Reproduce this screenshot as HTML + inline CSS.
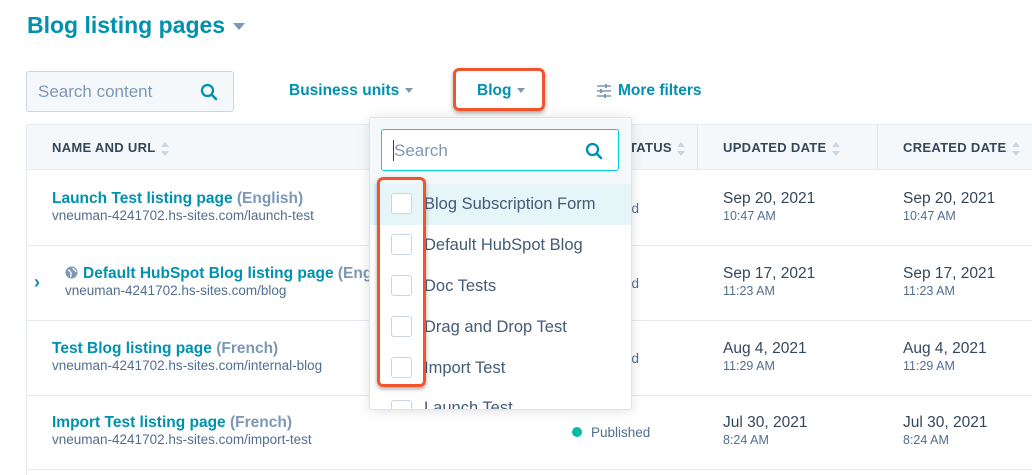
<!DOCTYPE html>
<html><head><style>
*{box-sizing:border-box;margin:0;padding:0}
body{width:1032px;height:475px;overflow:hidden;background:#fff;font-family:"Liberation Sans",sans-serif;position:relative;color:#33475b}
.a{position:absolute}
.teal{color:#0091ae}
.hd{font-size:13px;font-weight:bold;color:#33475b;letter-spacing:.3px}
.t1{font-size:15.5px;font-weight:bold;color:#0091ae;white-space:nowrap}
.t1 span{color:#7c98b6}
.url{font-size:13.5px;color:#516f90;white-space:nowrap}
.d1{font-size:15.5px;color:#33475b}
.d2{font-size:12.5px;color:#516f90}
.line{position:absolute;left:26px;right:0;height:1px;background:#e5ebf0}
.cb{position:absolute;left:391px;width:21px;height:21px;border:1.5px solid #cbd6e2;border-radius:3px;background:#fff}
.it{position:absolute;left:424px;font-size:16.5px;color:#425b76;white-space:nowrap}
.caret{display:inline-block;width:0;height:0;border-left:4px solid transparent;border-right:4px solid transparent;border-top:5px solid #7c98b6;vertical-align:middle;margin-left:6px}
.sort{display:inline-block;width:8px;height:14px;vertical-align:middle;margin-left:5px;position:relative}
.sort:before{content:"";position:absolute;top:0;left:0;border-left:4px solid transparent;border-right:4px solid transparent;border-bottom:5px solid #cbd6e2}
.sort:after{content:"";position:absolute;bottom:0;left:0;border-left:4px solid transparent;border-right:4px solid transparent;border-top:5px solid #cbd6e2}
</style></head><body>
<div class="a" style="left:27px;top:12px;font-size:23px;font-weight:bold;color:#0091ae">Blog listing pages <span class="caret" style="border-left-width:6px;border-right-width:6px;border-top-width:7px;margin-left:2px"></span></div>

<div class="a" style="left:26px;top:71px;width:208px;height:41px;border:1px solid #cbd6e2;border-radius:3px;background:#f5f8fa"></div>
<div class="a" style="left:38px;top:82px;font-size:17px;color:#7c98b6">Search content</div>
<svg class="a" style="left:200px;top:83px" width="18" height="18" viewBox="0 0 18 18"><circle cx="7.5" cy="7.5" r="5.5" fill="none" stroke="#0091ae" stroke-width="2.3"/><path d="M11.5 11.5L16 16" stroke="#0091ae" stroke-width="2.5" stroke-linecap="round"/></svg>

<div class="a t1" style="left:289px;top:82px;color:#0091ae">Business units<span class="caret"></span></div>

<div class="a" style="left:453px;top:68px;width:92px;height:43px;border:3px solid #f2542d;border-radius:6px;box-shadow:0 2px 4px rgba(0,0,0,.35)"></div>
<div class="a t1" style="left:477px;top:82px">Blog<span class="caret"></span></div>

<svg class="a" style="left:597px;top:84px" width="14" height="14" viewBox="0 0 14 14" stroke="#7c98b6" stroke-width="1.5"><path d="M0 2h14M0 7h14M0 12h14"/><path d="M9 0v4M4 5v4M8 10v4" stroke-width="2"/></svg>
<div class="a t1" style="left:618px;top:82px">More filters</div>

<div class="a" style="left:26px;top:124px;right:0;height:46px;background:#f5f8fa;border:1px solid #e5ebf0;border-right:none"></div>
<div class="a" style="left:26px;top:124px;width:1px;height:351px;background:#e5ebf0"></div>
<div class="a" style="left:697px;top:124px;width:1px;height:46px;background:#dfe3eb"></div>
<div class="a" style="left:877px;top:124px;width:1px;height:46px;background:#dfe3eb"></div>
<div class="a hd" style="left:52px;top:140px">NAME AND URL<span class="sort"></span></div>
<div class="a hd" style="left:620px;top:140px">STATUS<span class="sort"></span></div>
<div class="a hd" style="left:723px;top:140px">UPDATED DATE<span class="sort"></span></div>
<div class="a hd" style="left:903px;top:140px">CREATED DATE<span class="sort"></span></div>
<div class="line" style="top:245px"></div>
<div class="line" style="top:320px"></div>
<div class="line" style="top:395px"></div>
<div class="line" style="top:469px"></div>

<div class="a t1" style="left:52px;top:190px">Launch Test listing page <span>(English)</span></div>
<div class="a url" style="left:52px;top:208px">vneuman-4241702.hs-sites.com/launch-test</div>
<div class="a teal" style="left:34px;top:272px;font-size:18px;font-weight:bold">›</div>
<svg class="a" style="left:65px;top:266px" width="13" height="13" viewBox="0 0 13 13"><circle cx="6.5" cy="6.5" r="6" fill="#7c98b6"/><path d="M3 4c2 0 2 2 3 3s-1 3 0 4M8 2c0 2 3 2 3 4" stroke="#fff" stroke-width="1.3" fill="none"/></svg>
<div class="a t1" style="left:83px;top:265px">Default HubSpot Blog listing page <span>(Eng</span></div>
<div class="a url" style="left:65px;top:283px">vneuman-4241702.hs-sites.com/blog</div>
<div class="a t1" style="left:52px;top:340px">Test Blog listing page <span>(French)</span></div>
<div class="a url" style="left:52px;top:358px">vneuman-4241702.hs-sites.com/internal-blog</div>
<div class="a t1" style="left:52px;top:414px">Import Test listing page <span>(French)</span></div>
<div class="a url" style="left:52px;top:432px">vneuman-4241702.hs-sites.com/import-test</div>

<div class="a url" style="left:624px;top:201px">ed</div>
<div class="a url" style="left:624px;top:276px">ed</div>
<div class="a url" style="left:624px;top:351px">ed</div>
<div class="a" style="left:572px;top:427px;width:10px;height:10px;border-radius:50%;background:#00bda5"></div>
<div class="a url" style="left:591px;top:425px">Published</div>

<div class="a d1" style="left:723px;top:190px">Sep 20, 2021</div><div class="a d2" style="left:723px;top:209px">10:47 AM</div>
<div class="a d1" style="left:903px;top:190px">Sep 20, 2021</div><div class="a d2" style="left:903px;top:209px">10:47 AM</div>
<div class="a d1" style="left:723px;top:265px">Sep 17, 2021</div><div class="a d2" style="left:723px;top:284px">11:23 AM</div>
<div class="a d1" style="left:903px;top:265px">Sep 17, 2021</div><div class="a d2" style="left:903px;top:284px">11:23 AM</div>
<div class="a d1" style="left:723px;top:340px">Aug 4, 2021</div><div class="a d2" style="left:723px;top:359px">11:29 AM</div>
<div class="a d1" style="left:903px;top:340px">Aug 4, 2021</div><div class="a d2" style="left:903px;top:359px">11:29 AM</div>
<div class="a d1" style="left:723px;top:414px">Jul 30, 2021</div><div class="a d2" style="left:723px;top:433px">8:24 AM</div>
<div class="a d1" style="left:903px;top:414px">Jul 30, 2021</div><div class="a d2" style="left:903px;top:433px">8:24 AM</div>

<div class="a" style="left:369px;top:117px;width:263px;height:293px;background:#fff;border:1px solid #dfe3eb;border-radius:3px;box-shadow:0 1px 12px rgba(0,0,0,.12);overflow:hidden">
  <div style="position:absolute;left:0;top:0;right:0;height:66px;background:#f5f8fa"></div>
  <div style="position:absolute;left:0;top:66px;right:0;height:41px;background:#e5f5f8"></div>
</div>
<div class="a" style="left:381px;top:129px;width:238px;height:42px;border:1.5px solid #00d0e4;border-radius:3px;background:#fff"></div>
<div class="a" style="left:393px;top:140px;width:1px;height:21px;background:#33475b"></div>
<div class="a" style="left:394px;top:141px;font-size:17px;color:#7c98b6">Search</div>
<svg class="a" style="left:585px;top:142px" width="18" height="18" viewBox="0 0 18 18"><circle cx="7.5" cy="7.5" r="5.5" fill="none" stroke="#0091ae" stroke-width="2.3"/><path d="M11.5 11.5L16 16" stroke="#0091ae" stroke-width="2.5" stroke-linecap="round"/></svg>

<div class="cb" style="top:193px"></div><div class="it" style="top:195px">Blog Subscription Form</div>
<div class="cb" style="top:234px"></div><div class="it" style="top:236px">Default HubSpot Blog</div>
<div class="cb" style="top:275px"></div><div class="it" style="top:277px">Doc Tests</div>
<div class="cb" style="top:316px"></div><div class="it" style="top:318px">Drag and Drop Test</div>
<div class="cb" style="top:357px"></div><div class="it" style="top:359px">Import Test</div>
<div class="a" style="left:370px;top:398px;width:261px;height:11px;overflow:hidden">
  <div class="cb" style="left:21px;top:2px"></div><div class="it" style="left:54px;top:1px">Launch Test</div>
</div>

<div class="a" style="left:377px;top:177px;width:49px;height:210px;border:3px solid #f2542d;border-radius:6px;box-shadow:0 2px 4px rgba(0,0,0,.35)"></div>
</body></html>
